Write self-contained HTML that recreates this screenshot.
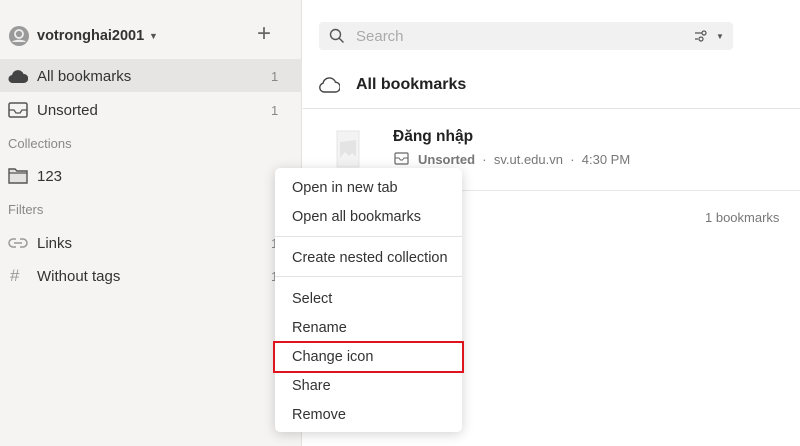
<!DOCTYPE html><html><head><style>
*{margin:0;padding:0;box-sizing:border-box}
body{width:800px;height:446px;overflow:hidden;font-family:"Liberation Sans",sans-serif;background:#fff;position:relative;color:#222}
.sb{position:absolute;left:0;top:0;width:302px;height:446px;background:#f5f4f3;border-right:1px solid #e2e1e0}
.row{position:absolute;left:0;width:302px;height:33px;display:flex;align-items:center;font-size:15px;color:#333;padding-top:2px}
.row .ic{position:absolute;left:8px;top:8px}
.row .t{position:absolute;left:37px}
.row .n{position:absolute;left:271px;font-size:13px;color:#888}
.hd{position:absolute;left:8px;font-size:13px;color:#888}
.abs{position:absolute}
.menu{position:absolute;left:275px;top:168px;width:187px;height:264px;background:#fff;border-radius:5px;box-shadow:0 2px 12px rgba(0,0,0,.18);font-size:14.5px;color:#333}
.menu div.i{position:absolute;left:17px}
.sep{position:absolute;left:0;width:187px;height:1px;background:#e3e3e3}
</style></head><body>
<div class="sb">
 <svg class="abs" style="left:9px;top:26px" width="20" height="20" viewBox="0 0 20 20"><circle cx="10" cy="10" r="10" fill="#9a9a9a"/><circle cx="10" cy="8" r="4" fill="none" stroke="#eee" stroke-width="1.8"/><path d="M3 16c2-3 12-3 14 0" fill="#eee"/></svg>
 <div class="abs" style="left:37px;top:28px;font-size:14.5px;font-weight:bold;color:#333">votronghai2001</div>
 <div class="abs" style="left:149px;top:31px;font-size:9px;color:#555">▼</div>
 <div class="abs" style="left:257px;top:20px;font-size:24px;color:#666;font-weight:300">+</div>
 <div class="row" style="top:59px;background:#e6e5e4"><svg class="ic" width="20" height="18" viewBox="0 0 20 18"><path d="M5 16a4 4 0 0 1-1-8 6 6 0 0 1 11.5-1A4.5 4.5 0 0 1 16 16z" fill="#444"/></svg><span class="t">All bookmarks</span><span class="n">1</span></div>
 <div class="row" style="top:93px"><svg class="ic" width="20" height="18" viewBox="0 0 20 18"><rect x="1" y="2" width="18" height="14" rx="1.5" fill="none" stroke="#555" stroke-width="1.5"/><path d="M1 9h5l2 3h4l2-3h5" fill="none" stroke="#555" stroke-width="1.3"/></svg><span class="t">Unsorted</span><span class="n">1</span></div>
 <div class="hd" style="top:136px">Collections</div>
 <div class="row" style="top:159px"><svg class="ic" width="20" height="18" viewBox="0 0 20 18"><path d="M1 2h6l2 2h10v12H1z" fill="#e3e2e1" stroke="#555" stroke-width="1.4"/><path d="M1 6h18" stroke="#555" stroke-width="1.2"/></svg><span class="t">123</span></div>
 <div class="hd" style="top:202px">Filters</div>
 <div class="row" style="top:226px"><svg class="ic" width="20" height="18" viewBox="0 0 20 18"><path d="M8 5H5a4 4 0 0 0 0 8h3M12 5h3a4 4 0 0 1 0 8h-3M6 9h8" fill="none" stroke="#999" stroke-width="1.5"/></svg><span class="t">Links</span><span class="n">1</span></div>
 <div class="row" style="top:259px"><span class="ic" style="font-size:17px;color:#999;top:7px;left:10px">#</span><span class="t">Without tags</span><span class="n">1</span></div>
</div>
<div class="abs" style="left:319px;top:22px;width:414px;height:28px;background:#f1f1f1;border-radius:4px"></div>
<svg class="abs" style="left:329px;top:28px" width="16" height="16" viewBox="0 0 16 16"><circle cx="6.5" cy="6.5" r="5" fill="none" stroke="#555" stroke-width="1.4"/><path d="M10 10l4.5 4.5" stroke="#555" stroke-width="1.4"/></svg>
<div class="abs" style="left:356px;top:28px;font-size:15px;color:#aaa">Search</div>
<svg class="abs" style="left:694px;top:29px" width="14" height="14" viewBox="0 0 14 14"><path d="M1 4h7M1 10h3" stroke="#555" stroke-width="1.2"/><circle cx="10" cy="4" r="2" fill="none" stroke="#555" stroke-width="1.2"/><circle cx="7" cy="10" r="2" fill="none" stroke="#555" stroke-width="1.2"/></svg>
<div class="abs" style="left:716px;top:32px;font-size:8px;color:#555">▼</div>
<svg class="abs" style="left:318px;top:76px" width="22" height="18" viewBox="0 0 22 18"><path d="M6 16a4.5 4.5 0 0 1-1-8.8 6.5 6.5 0 0 1 12.5-1A4.8 4.8 0 0 1 17 16z" fill="none" stroke="#444" stroke-width="1.4"/></svg>
<div class="abs" style="left:356px;top:76px;font-size:16px;font-weight:bold;color:#222">All bookmarks</div>
<div class="abs" style="left:303px;top:108px;width:497px;height:1px;background:#e3e3e3"></div>
<svg class="abs" style="left:336px;top:130px" width="24" height="38" viewBox="0 0 24 38"><rect x="1" y="1" width="22" height="36" fill="#f3f3f3" stroke="#e6e6e6"/><path d="M4 12v16l5-6 4 4 3-3 4 4V10z" fill="#e4e4e4"/></svg>
<div class="abs" style="left:393px;top:128px;font-size:15.5px;font-weight:bold;color:#222">Đăng nhập</div>
<svg class="abs" style="left:394px;top:152px" width="15" height="13" viewBox="0 0 15 13"><rect x="1" y="1" width="13" height="11" rx="1" fill="none" stroke="#666" stroke-width="1.2"/><path d="M1 6h4l1.5 2h2L10 6h4" fill="none" stroke="#666" stroke-width="1"/></svg>
<div class="abs" style="left:418px;top:152px;font-size:13px;color:#777"><b>Unsorted</b> &nbsp;·&nbsp; sv.ut.edu.vn &nbsp;·&nbsp; 4:30 PM</div>
<div class="abs" style="left:303px;top:190px;width:497px;height:1px;background:#e6e6e6"></div>
<div class="abs" style="left:705px;top:210px;font-size:13px;color:#777">1 bookmarks</div>
<div class="menu">
 <div class="i" style="top:12px">Open in new tab</div>
 <div class="i" style="top:41px">Open all bookmarks</div>
 <div class="sep" style="top:68px"></div>
 <div class="i" style="top:82px">Create nested collection</div>
 <div class="sep" style="top:108px"></div>
 <div class="i" style="top:123px">Select</div>
 <div class="i" style="top:152px">Rename</div>
 <div class="i" style="top:181px">Change icon</div>
 <div class="i" style="top:210px">Share</div>
 <div class="i" style="top:239px">Remove</div>
</div>
<div class="abs" style="left:273px;top:341px;width:191px;height:32px;border:2.5px solid #e0141e"></div>
</body></html>
